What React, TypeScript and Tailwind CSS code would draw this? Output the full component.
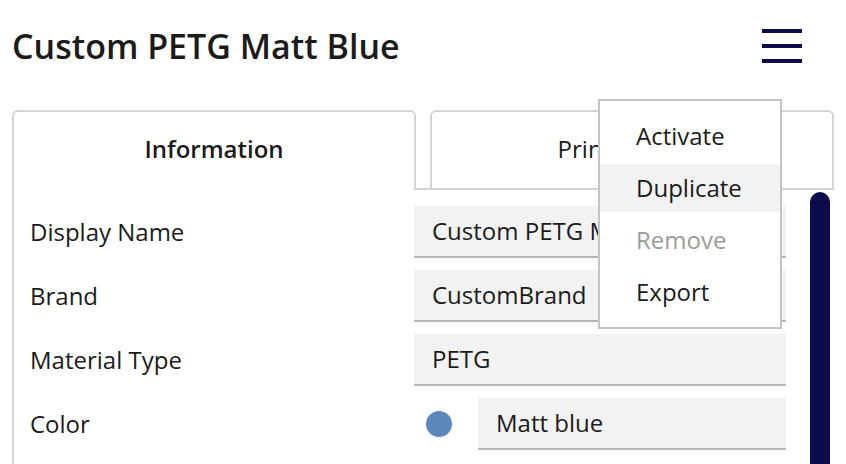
import React from 'react';

const Field = ({ label, value }: { label: string; value: string }) => (
  <div className="flex items-center h-[52px]">
    <div className="flex-1 pl-[16px]">{label}</div>
    <div className="w-[372px] h-[52px] bg-[#f2f2f2] border-b-2 border-[#b4b4b4] flex items-center pl-[18px] whitespace-nowrap overflow-hidden">
      {value}
    </div>
  </div>
);

const MenuItem = ({ label, active, disabled }: { label: string; active?: boolean; disabled?: boolean }) => (
  <div
    className={
      'h-[48px] flex items-center pl-[36px] ' +
      (active ? 'bg-[#f2f2f2] ' : '') +
      (disabled ? 'text-[#9b9b9b]' : 'text-[#1b1b1b]')
    }
  >
    {label}
  </div>
);

const App = () => {
  return (
    <div
      className="relative w-[846px] h-[464px] overflow-hidden bg-white text-[#1b1b1b] text-[24px]"
      style={{ fontFamily: '"Open Sans", "Noto Sans", sans-serif' }}
    >
      <div className="flex items-center justify-between h-[92px] pl-[12px] pr-[44px]">
        <h1 className="text-[34px] font-semibold">Custom PETG Matt Blue</h1>
        <svg width="40" height="34" viewBox="0 0 40 34">
          <rect x="0" y="0" width="40" height="4" fill="#0d0b4c" />
          <rect x="0" y="15" width="40" height="4" fill="#0d0b4c" />
          <rect x="0" y="30" width="40" height="4" fill="#0d0b4c" />
        </svg>
      </div>

      <div className="mt-[18px] pl-[12px] flex items-end">
        <div className="w-[404px] h-[80px] border-2 border-b-0 border-[#d4d4d4] rounded-t-[6px] flex items-center justify-center pb-[4px] font-semibold">
          Information
        </div>
        <div className="w-[14px] border-b-2 border-[#d4d4d4]" />
        <div className="w-[404px] h-[80px] border-2 border-[#d4d4d4] rounded-t-[6px] flex items-center justify-center pb-[2px]">
          Print Settings
        </div>
      </div>

      <div className="ml-[12px] w-[822px] border-l-2 border-[#d4d4d4] flex h-[300px]">
        <div className="w-[772px] pt-[16px] flex flex-col gap-[12px]">
          <Field label="Display Name" value="Custom PETG Matt Blue" />
          <Field label="Brand" value="CustomBrand" />
          <Field label="Material Type" value="PETG" />
          <div className="flex items-center h-[52px]">
            <div className="flex-1 pl-[16px]">Color</div>
            <div className="w-[26px] h-[26px] rounded-full bg-[#5c88bd] mr-[26px]" />
            <div className="w-[308px] h-[52px] bg-[#f2f2f2] border-b-2 border-[#b4b4b4] flex items-center pl-[18px]">
              Matt blue
            </div>
          </div>
        </div>
        <div className="ml-[24px] mt-[2px] w-[20px] h-[400px] bg-[#0d0a4e] rounded-t-full" />
      </div>

      <div className="absolute left-[598px] top-[99px] w-[184px] h-[230px] bg-white border-2 border-[#c4c4c4] py-[11px] flex flex-col gap-[4px]">
        <MenuItem label="Activate" />
        <MenuItem label="Duplicate" active />
        <MenuItem label="Remove" disabled />
        <MenuItem label="Export" />
      </div>
    </div>
  );
};

export default App;
